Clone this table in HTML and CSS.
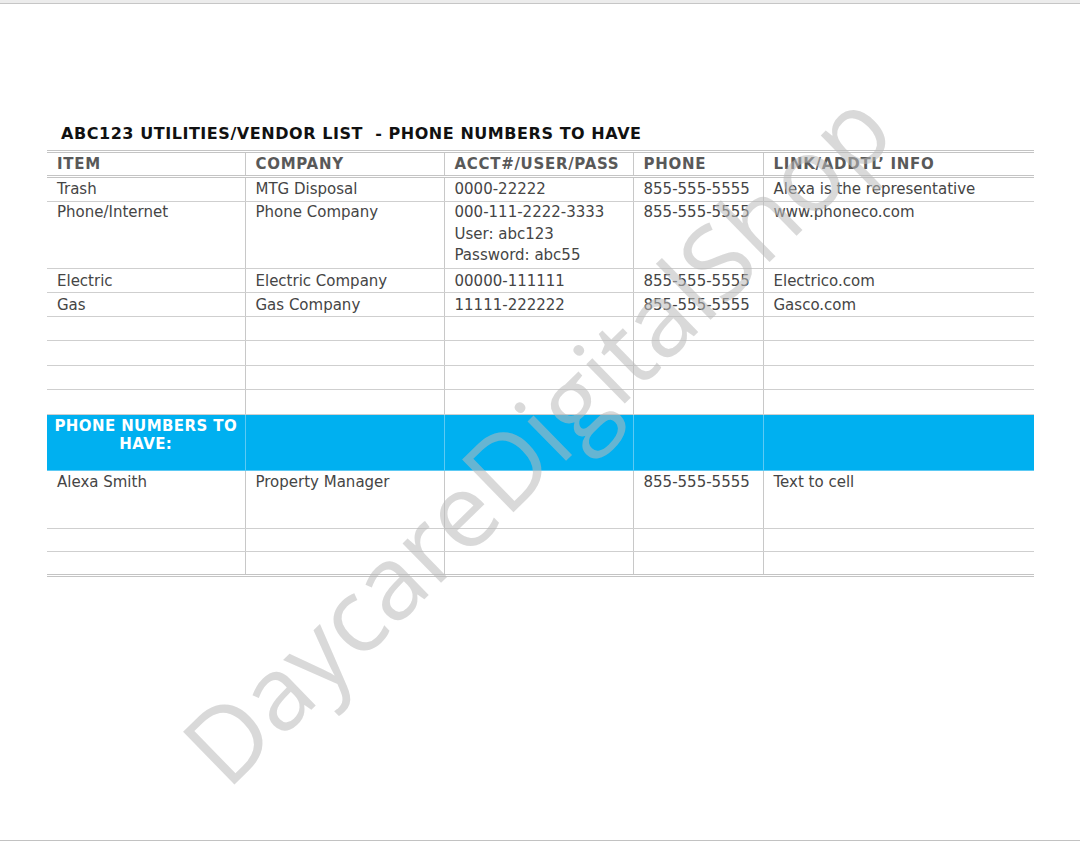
FILE: index.html
```html
<!DOCTYPE html>
<html>
<head>
<meta charset="utf-8">
<link rel="stylesheet" href="styles.css">
</head>
<body>
<div class="sheet">
  <div class="topbar"></div>
  <div class="content">
    <h1 class="title">ABC123 UTILITIES/VENDOR LIST &nbsp;- PHONE NUMBERS TO HAVE</h1>
    <table class="grid">
      <colgroup>
        <col class="c1"><col class="c2"><col class="c3"><col class="c4"><col class="c5">
      </colgroup>
      <thead>
        <tr class="head">
          <th>ITEM</th><th>COMPANY</th><th>ACCT#/USER/PASS</th><th>PHONE</th><th>LINK/ADDTL’ INFO</th>
        </tr>
      </thead>
      <tbody>
        <tr class="r first"><td>Trash</td><td>MTG Disposal</td><td>0000-22222</td><td>855-555-5555</td><td>Alexa is the representative</td></tr>
        <tr class="r tall"><td>Phone/Internet</td><td>Phone Company</td><td>000-111-2222-3333<br>User: abc123<br>Password: abc55</td><td>855-555-5555</td><td>www.phoneco.com</td></tr>
        <tr class="r"><td>Electric</td><td>Electric Company</td><td>00000-111111</td><td>855-555-5555</td><td>Electrico.com</td></tr>
        <tr class="r"><td>Gas</td><td>Gas Company</td><td>11111-222222</td><td>855-555-5555</td><td>Gasco.com</td></tr>
        <tr class="r empty"><td></td><td></td><td></td><td></td><td></td></tr>
        <tr class="r empty"><td></td><td></td><td></td><td></td><td></td></tr>
        <tr class="r empty"><td></td><td></td><td></td><td></td><td></td></tr>
        <tr class="r empty"><td></td><td></td><td></td><td></td><td></td></tr>
        <tr class="band"><td class="band-label">PHONE NUMBERS TO HAVE:</td><td></td><td></td><td></td><td></td></tr>
        <tr class="r contact"><td>Alexa Smith</td><td>Property Manager</td><td></td><td>855-555-5555</td><td>Text to cell</td></tr>
        <tr class="r tail"><td></td><td></td><td></td><td></td><td></td></tr>
        <tr class="r tail last"><td></td><td></td><td></td><td></td><td></td></tr>
      </tbody>
    </table>
  </div>
  <div class="footer"></div>
  <div class="watermark">DaycareDigitalShop</div>
</div>
</body>
</html>
```
FILE: styles.css
```css
html, body {
  margin: 0;
  padding: 0;
  background: #ffffff;
}
.sheet {
  position: relative;
  height: 841px;
  display: flex;
  flex-direction: column;
  overflow: hidden;
  font-family: "DejaVu Sans", Verdana, sans-serif;
}
.topbar {
  height: 3px;
  background: #ececec;
  border-bottom: 1px solid #c6c6c6;
}
.content {
  padding: 0 46px 0 47px;
}
.title {
  margin: 121px 0 7px 14px;
  font-size: 16px;
  line-height: 18px;
  font-weight: bold;
  color: #111;
  letter-spacing: 0.55px;
}
.grid {
  width: 987px;
  border-collapse: collapse;
  table-layout: fixed;
  border-top: 3px double #c4c4c4;
  border-bottom: 3px double #c4c4c4;
}
.c1 { width: 198px; }
.c2 { width: 199px; }
.c3 { width: 189px; }
.c4 { width: 130px; }
.c5 { width: 271px; }
.grid th, .grid td {
  padding: 2px 10px 1px 10px;
  border-left: 1px solid #c8c8c8;
  vertical-align: top;
  text-align: left;
  overflow: hidden;
  white-space: nowrap;
}
.grid th:first-child, .grid td:first-child {
  border-left: none;
}
.head th {
  height: 20px;
  font-size: 15px;
  line-height: 20px;
  font-weight: bold;
  color: #595959;
  letter-spacing: 0.7px;
  border-bottom: 3px double #c4c4c4;
  padding-top: 1px;
}
.r td {
  height: 20px;
  font-size: 15px;
  line-height: 20px;
  color: #454545;
  border-bottom: 1px solid #cfcfcf;
}
.r.first td {
  padding-top: 1px;
  height: 21px;
}
.r.tall td {
  height: 64px;
  line-height: 21.5px;
  padding-top: 0;
}
.r.empty td {
  height: 20.5px;
}
.r.contact td {
  height: 55px;
  padding-top: 1px;
}
.r.tail td {
  height: 19px;
}
.r.last td {
  border-bottom: none;
}
.band td {
  height: 52px;
  background: #00b0f0;
  border-left: 1px solid #5ccaf4;
  border-bottom: 1px solid #5ccaf4;
  padding: 2px 6px 1px 6px;
}
.band .band-label {
  white-space: normal;
  text-align: center;
  font-size: 15px;
  line-height: 18px;
  font-weight: bold;
  letter-spacing: 0.4px;
  color: #ffffff;
}
.footer {
  margin-top: auto;
  height: 0;
  border-top: 1px solid #c2c2c2;
}
.watermark {
  position: absolute;
  left: 535px;
  top: 436px;
  transform: translate(-50%, -50%) rotate(-44.3deg);
  font-family: "Open Sans", "Noto Sans", sans-serif;
  font-size: 103px;
  line-height: 1;
  color: rgba(185, 185, 185, 0.55);
  white-space: nowrap;
  pointer-events: none;
}
```
